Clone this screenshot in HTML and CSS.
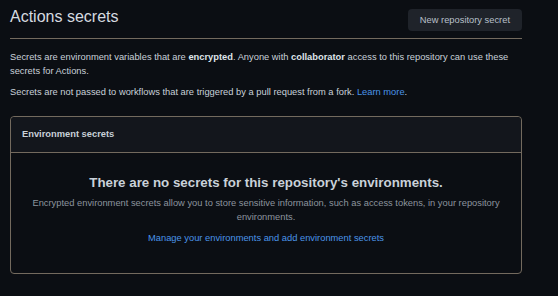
FILE: index.html
```html
<!DOCTYPE html>
<html lang="en">
<head>
    <meta charset="UTF-8">
    <meta name="viewport" content="width=device-width, initial-scale=1.0">
    <title>Actions secrets</title>
    <link rel="stylesheet" href="styles.css">
</head>
<body>
    <div class="subhead">
        <h2 class="subhead-title">Actions secrets</h2>
        <a href="#" class="btn">New repository secret</a>
    </div>
    <p class="note">Secrets are environment variables that are <strong>encrypted</strong>. Anyone with <strong>collaborator</strong> access to this repository can use these secrets for Actions.</p>
    <p class="note">Secrets are not passed to workflows that are triggered by a pull request from a fork. <a href="#">Learn more</a>.</p>
    <div class="box">
        <div class="box-header">Environment secrets</div>
        <div class="blankslate">
            <h3>There are no secrets for this repository's environments.</h3>
            <p>Encrypted environment secrets allow you to store sensitive information, such as access tokens, in your repository environments.</p>
            <a href="#">Manage your environments and add environment secrets</a>
        </div>
    </div>
</body>
</html>
```

FILE: styles.css
```css
body {
    background-color: #0b0e13;
    color: #c9d1d9;
    font-family: 'Liberation Sans', Arial, sans-serif;
    font-size: 9.33px;
    line-height: 14px;
    margin: 0;
    padding: 0 36px 0 10px;
}
a {
    color: #4a94e8;
    text-decoration: none;
}
.subhead {
    display: flex;
    justify-content: space-between;
    align-items: flex-start;
    padding: 5px 0 7px;
    border-bottom: 1px solid #736a5e;
}
.subhead-title {
    margin: 0;
    font-size: 16px;
    font-weight: normal;
    line-height: 24px;
    color: #d6dbe0;
}
.btn {
    margin-top: 4px;
    background-color: #1f232a;
    color: #b8c0c9;
    border-radius: 4px;
    height: 22px;
    line-height: 22px;
    padding: 0 12px;
    white-space: nowrap;
}
.note {
    margin: 11px 0 0;
}
.note + .note {
    margin-top: 7px;
}
.note strong {
    color: #dfe4e9;
}
.box {
    margin-top: 17px;
    border: 1px solid #736a5e;
    border-radius: 4px;
}
.box-header {
    background-color: #13161c;
    padding: 10px 11px;
    line-height: 15px;
    font-weight: bold;
    border-bottom: 1px solid #736a5e;
    border-radius: 4px 4px 0 0;
}
.blankslate {
    text-align: center;
    padding: 20px 12px 28px;
}
.blankslate h3 {
    margin: 0;
    font-size: 13.33px;
    line-height: 20px;
    color: #c9d1d9;
}
.blankslate p {
    margin: 3px 0 0;
    color: #8b949e;
}
.blankslate a {
    display: inline-block;
    margin-top: 7px;
}
```
